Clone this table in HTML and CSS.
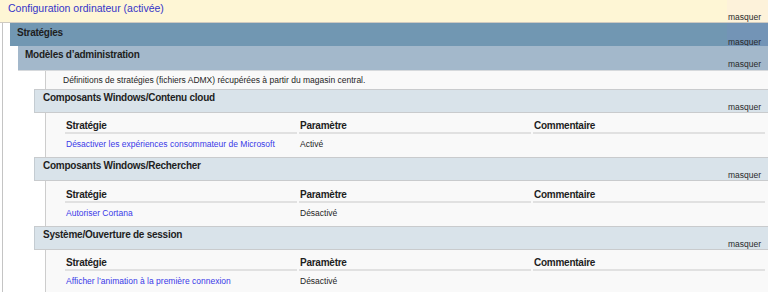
FILE: index.html
```html
<!DOCTYPE html>
<html lang="fr">
<head>
<meta charset="utf-8">
<title>Rapport</title>
<link rel="stylesheet" href="styles.css">
</head>
<body>
<div class="page">
  <div class="hdr hdr-main">
    <span class="title main-title">Configuration ordinateur (activée)</span>
    <span class="expando">masquer</span>
  </div>
  <div class="frame">
    <div class="hdr hdr-l1">
      <span class="title">Stratégies</span>
      <span class="expando">masquer</span>
    </div>
    <div class="hdr hdr-l2">
      <span class="title">Modèles d’administration</span>
      <span class="expando">masquer</span>
    </div>
    <div class="desc">Définitions de stratégies (fichiers ADMX) récupérées à partir du magasin central.</div>

    <div class="cat">
      <div class="hdr hdr-cat">
        <span class="title">Composants Windows/Contenu cloud</span>
        <span class="expando">masquer</span>
      </div>
      <div class="cat-body">
        <table class="pol">
          <thead><tr><th>Stratégie</th><th>Paramètre</th><th>Commentaire</th></tr></thead>
          <tbody><tr><td class="link">Désactiver les expériences consommateur de Microsoft</td><td>Activé</td><td></td></tr></tbody>
        </table>
      </div>
    </div>

    <div class="cat">
      <div class="hdr hdr-cat">
        <span class="title">Composants Windows/Rechercher</span>
        <span class="expando">masquer</span>
      </div>
      <div class="cat-body cat-body-tall">
        <table class="pol">
          <thead><tr><th>Stratégie</th><th>Paramètre</th><th>Commentaire</th></tr></thead>
          <tbody><tr><td class="link">Autoriser Cortana</td><td>Désactivé</td><td></td></tr></tbody>
        </table>
      </div>
    </div>

    <div class="cat">
      <div class="hdr hdr-cat">
        <span class="title">Système/Ouverture de session</span>
        <span class="expando">masquer</span>
      </div>
      <div class="cat-body">
        <table class="pol">
          <thead><tr><th>Stratégie</th><th>Paramètre</th><th>Commentaire</th></tr></thead>
          <tbody><tr><td class="link">Afficher l’animation à la première connexion</td><td>Désactivé</td><td></td></tr></tbody>
        </table>
      </div>
    </div>
  </div>
</div>
</body>
</html>
```

FILE: styles.css
```css
html, body {
  margin: 0;
  padding: 0;
  overflow: hidden;
  background: #ffffff;
}
body {
  font-family: "Liberation Sans", Arial, sans-serif;
  font-size: 8.5px;
  color: #1e1e1e;
  width: 768px;
  height: 292px;
}
.page {
  display: flex;
  flex-direction: column;
}
.hdr {
  display: flex;
  justify-content: space-between;
  box-sizing: border-box;
}
.title {
  font-weight: bold;
  font-size: 10px;
  letter-spacing: -0.25px;
  line-height: 12px;
}
.expando {
  width: 41px;
  box-sizing: border-box;
  padding-left: 1px;
  font-size: 8.5px;
  line-height: 8px;
  color: #2a2a2a;
  align-self: stretch;
  display: flex;
  align-items: flex-end;
  padding-bottom: 1px;
}
.hdr-main {
  height: 23px;
  background: #fef6d5;
  border-bottom: 1px solid #cfcac0;
  padding-left: 8px;
}
.hdr-main .expando { background: #fdf2da; padding-bottom: 1px; }
.main-title {
  font-weight: normal;
  font-size: 10.5px;
  letter-spacing: 0;
  color: #3434c8;
  padding-top: 2px;
}
.frame {
  border-left: 1px solid #c4c4c4;
  margin-left: 2px;
  display: flex;
  flex-direction: column;
}
.hdr-l1 {
  margin-left: 7px;
  height: 23px;
  background: #7197b2;
  padding-left: 7px;
}
.hdr-l1 .title { padding-top: 4px; }
.hdr-l1 .expando { background: #7394b6; padding-bottom: 0; }
.hdr-l2 {
  margin-left: 15px;
  height: 25px;
  background: #a3b8cb;
  padding-left: 7px;
  border-bottom: 1px solid #d6d9dc;
}
.hdr-l2 .title { padding-top: 3px; }
.hdr-l2 .expando { padding-bottom: 2px; }
.desc {
  margin-left: 42px;
  border-left: 1px solid #cdcdcd;
  background: #f9f9f9;
  height: 18px;
  box-sizing: border-box;
  padding-left: 17px;
  line-height: 19px;
  font-size: 8.5px;
}
.cat {
  display: flex;
  flex-direction: column;
}
.hdr-cat {
  margin-left: 31px;
  height: 24px;
  background: #d9e3ea;
  border-top: 1px solid #c9cbcd;
  border-bottom: 1px solid #c9cbcd;
  border-left: 1px solid #c4ccd2;
  padding-left: 8px;
}
.hdr-cat .title { padding-top: 2px; }
.hdr-cat .expando { padding-bottom: 1px; }
.cat-body {
  margin-left: 42px;
  border-left: 1px solid #cdcdcd;
  background: #f9f9f9;
  padding-left: 17px;
}
.cat-body-tall { padding-top: 1px; }
.pol {
  border-collapse: separate;
  border-spacing: 2px 0;
  table-layout: fixed;
  width: 704px;
}
.pol th {
  text-align: left;
  font-weight: bold;
  font-size: 10px;
  letter-spacing: -0.25px;
  line-height: 12px;
  padding: 7px 1px 0;
  border-bottom: 2px solid #e1e1e1;
}
.pol td {
  line-height: 12px;
  padding: 4px 1px 7px;
  font-size: 8.5px;
  white-space: nowrap;
}
.pol td.link { color: #3a3ae8; }
```
